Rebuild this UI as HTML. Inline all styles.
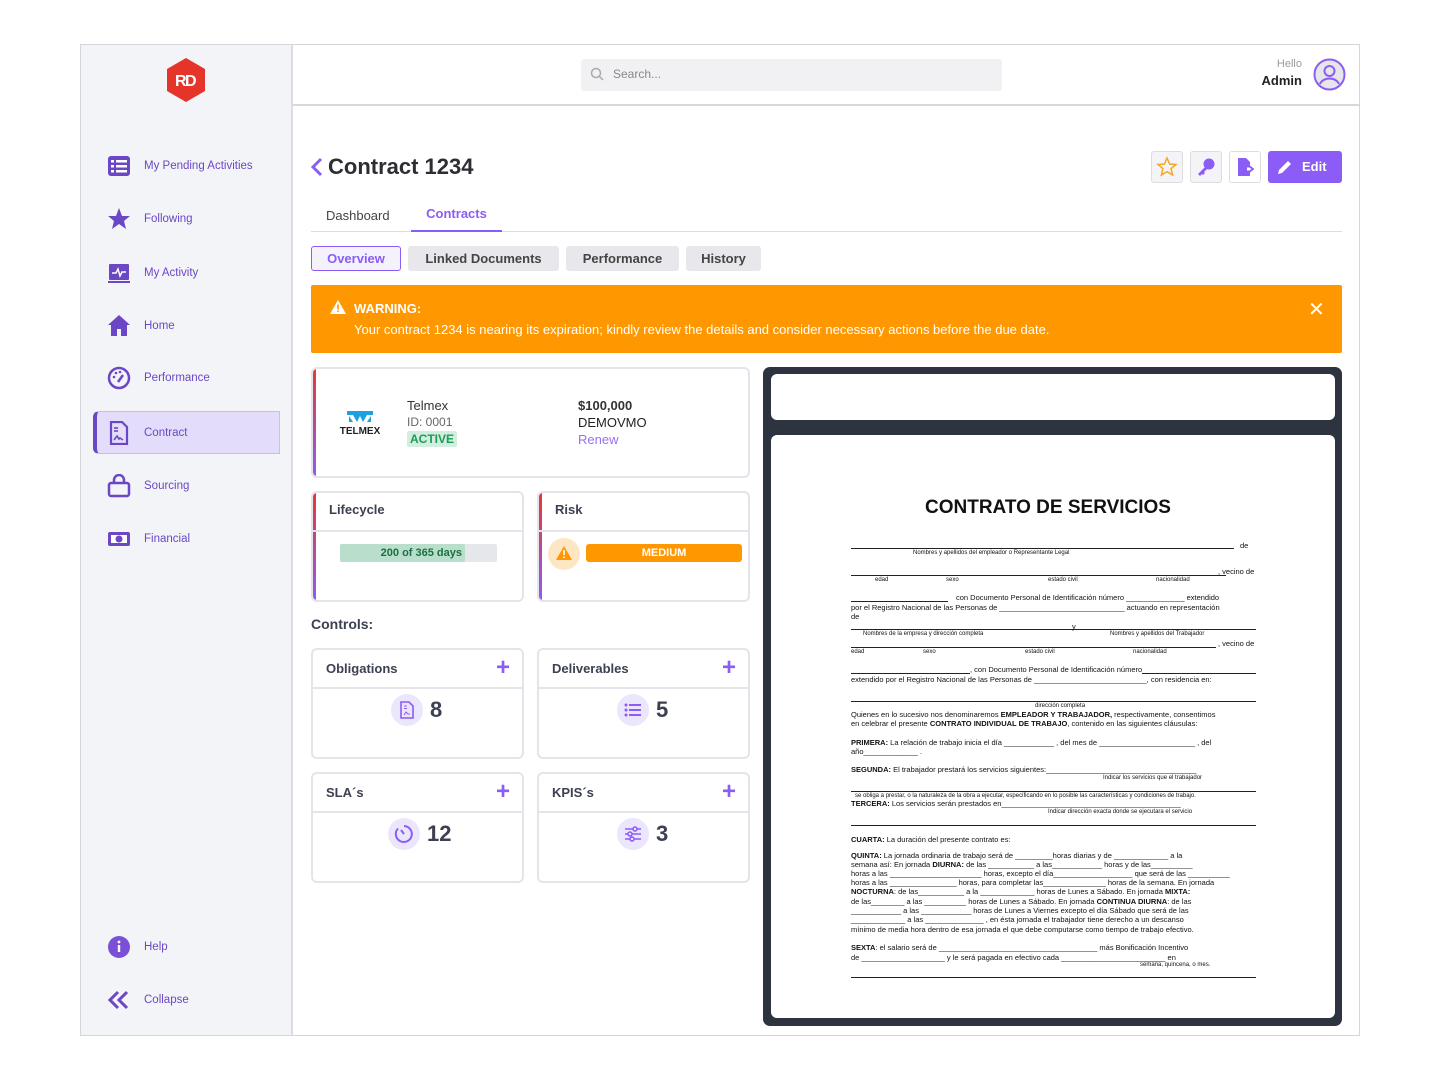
<!DOCTYPE html>
<html><head><meta charset="utf-8"><style>
*{box-sizing:border-box;margin:0;padding:0}
body{width:1440px;height:1080px;background:#fff;font-family:"Liberation Sans",sans-serif;position:relative;overflow:hidden;color:#333}
.abs{position:absolute}
.frame{left:80px;top:44px;width:1280px;height:992px;border:1px solid #d6d6da}
.side{left:81px;top:45px;width:212px;height:990px;background:#f3f4f8;border-right:2px solid #dcdce2}
.nav{position:absolute;left:26px;display:flex;align-items:center;font-size:11.5px;color:#6b47c6}
.nav svg{width:24px;height:24px;margin-right:13px}
.hdr{left:293px;top:45px;width:1066px;height:61px;border-bottom:2px solid #d8d8dc}
.card{position:absolute;background:#fff;border:2px solid #e4e4ea;border-radius:6px;overflow:hidden}
.accent::before{content:"";position:absolute;left:0;top:0;bottom:0;width:3px;background:linear-gradient(#e53935,#8b5cf6)}
.ctitle{font-weight:bold;font-size:13px;color:#3d4050}
.plus{position:absolute;right:12px;top:8px;color:#8b5cf6;font-size:24px;line-height:20px;font-weight:bold}
.circ{width:32px;height:32px;border-radius:50%;background:#ece6fd;display:flex;align-items:center;justify-content:center}
.num{font-size:22px;font-weight:bold;color:#3d4050}
.d{position:absolute;font-size:7.5px;color:#111;white-space:nowrap;font-family:"Liberation Sans",sans-serif}
.ln{position:absolute;height:1px;background:#222}
.s{font-size:6px}
</style></head><body>
<div class="abs frame"></div>
<div class="abs side">
  <svg class="abs" style="left:84px;top:12px" width="42" height="46" viewBox="0 0 42 46"><polygon points="21,1 40,12 40,34 21,45 2,34 2,12" fill="#e5352b"/><text x="20" y="29" text-anchor="middle" font-family="Liberation Sans" font-weight="bold" font-size="16" fill="#fff" letter-spacing="-1.5">RD</text></svg>
  <div class="nav" style="top:109px"><svg viewBox="0 0 24 24"><rect x="1" y="2" width="22" height="20" rx="3" fill="#6b47c6"/><g fill="#fff"><rect x="4" y="6" width="3" height="2.5"/><rect x="9" y="6" width="11" height="2.5"/><rect x="4" y="11" width="3" height="2.5"/><rect x="9" y="11" width="11" height="2.5"/><rect x="4" y="16" width="3" height="2.5"/><rect x="9" y="16" width="11" height="2.5"/></g></svg>My Pending Activities</div>
  <div class="nav" style="top:162px"><svg viewBox="0 0 24 24"><polygon points="12,1 15,9 23,9 17,14 19,22 12,17 5,22 7,14 1,9 9,9" fill="#6b47c6"/></svg>Following</div>
  <div class="nav" style="top:216px"><svg viewBox="0 0 24 24"><rect x="2" y="3" width="20" height="16" rx="1" fill="#6b47c6"/><polyline points="5,12 9,12 11,8 13,15 15,11 19,11" stroke="#fff" stroke-width="1.5" fill="none"/><rect x="1" y="20" width="22" height="2" fill="#6b47c6"/></svg>My Activity</div>
  <div class="nav" style="top:269px"><svg viewBox="0 0 24 24"><path d="M12 1 L23 11 H20 V22 H14 V15 H10 V22 H4 V11 H1Z" fill="#6b47c6"/></svg>Home</div>
  <div class="nav" style="top:321px"><svg viewBox="0 0 24 24"><circle cx="12" cy="12" r="10" stroke="#6b47c6" stroke-width="2.5" fill="none"/><circle cx="7" cy="11" r="1.3" fill="#6b47c6"/><circle cx="9" cy="7" r="1.3" fill="#6b47c6"/><circle cx="13" cy="6" r="1.3" fill="#6b47c6"/><line x1="11" y1="16" x2="16" y2="9" stroke="#6b47c6" stroke-width="2.5"/></svg>Performance</div>
  <div class="abs" style="left:12px;top:366px;width:187px;height:43px;background:#e3dcfa;border:1px solid #c9bdf0;border-left:4px solid #6b47c6;border-radius:6px 0 0 6px"></div>
  <div class="nav" style="top:376px"><svg viewBox="0 0 24 24"><path d="M4 1 H15 L20 6 V23 H4Z" stroke="#6b47c6" stroke-width="2.2" fill="none"/><line x1="7" y1="7" x2="11" y2="7" stroke="#6b47c6" stroke-width="1.6"/><line x1="7" y1="10" x2="11" y2="10" stroke="#6b47c6" stroke-width="1.6"/><polyline points="7,19 10,15 12,18 13,17 16,19" stroke="#6b47c6" stroke-width="1.6" fill="none"/></svg>Contract</div>
  <div class="nav" style="top:429px"><svg viewBox="0 0 24 24"><rect x="2" y="9" width="20" height="13" rx="2" stroke="#6b47c6" stroke-width="2.5" fill="none"/><path d="M7 9 V6 a5 5 0 0 1 10 0 V9" stroke="#6b47c6" stroke-width="2.5" fill="none"/></svg>Sourcing</div>
  <div class="nav" style="top:482px"><svg viewBox="0 0 24 24"><rect x="1" y="5" width="22" height="14" rx="2" fill="#6b47c6"/><rect x="4" y="8" width="16" height="8" fill="#fff"/><circle cx="12" cy="12" r="3.5" fill="#6b47c6"/></svg>Financial</div>
  <div class="nav" style="top:890px"><svg viewBox="0 0 24 24"><circle cx="12" cy="12" r="11" fill="#7b4fd6"/><rect x="10.8" y="10" width="2.4" height="7" fill="#fff"/><circle cx="12" cy="7" r="1.4" fill="#fff"/></svg>Help</div>
  <div class="nav" style="top:943px"><svg viewBox="0 0 24 24"><polyline points="11,4 3,12 11,20" stroke="#6b47c6" stroke-width="3" fill="none"/><polyline points="20,4 12,12 20,20" stroke="#6b47c6" stroke-width="3" fill="none"/></svg>Collapse</div>
</div>
<div class="abs hdr"></div>
<div class="abs" style="left:581px;top:59px;width:421px;height:32px;background:#f1f1f4;border-radius:3px;font-size:12px;color:#888;padding:8px 0 0 32px">Search...
<svg class="abs" style="left:9px;top:8px" width="14" height="14" viewBox="0 0 14 14"><circle cx="6" cy="6" r="4.5" stroke="#aaa" stroke-width="1.5" fill="none"/><line x1="9.5" y1="9.5" x2="13" y2="13" stroke="#aaa" stroke-width="1.5"/></svg></div>
<div class="abs" style="left:1240px;top:58px;width:62px;text-align:right;font-size:11px;color:#999">Hello</div>
<div class="abs" style="left:1240px;top:73px;width:62px;text-align:right;font-size:13px;font-weight:bold;color:#222">Admin</div>
<svg class="abs" style="left:1313px;top:58px" width="33" height="33" viewBox="0 0 33 33"><circle cx="16.5" cy="16.5" r="15" fill="#e6e6ea" stroke="#8b5cf6" stroke-width="2"/><circle cx="16.5" cy="13" r="5" stroke="#8b5cf6" stroke-width="2" fill="none"/><path d="M7 26 a10 8 0 0 1 19 0" stroke="#8b5cf6" stroke-width="2" fill="none"/></svg>

<svg class="abs" style="left:310px;top:157px" width="14" height="20" viewBox="0 0 14 20"><polyline points="11,2 3,10 11,18" stroke="#8b5cf6" stroke-width="3" fill="none"/></svg>
<div class="abs" style="left:328px;top:154px;font-size:22px;font-weight:bold;color:#2d2d33">Contract 1234</div>
<div class="abs" style="left:1151px;top:151px;width:32px;height:32px;border:1px solid #ddd;border-radius:3px;background:#f4f4f8"><svg width="30" height="30" viewBox="0 0 30 30"><polygon points="15,6 17.6,12 24,12.5 19,16.7 20.6,23 15,19.6 9.4,23 11,16.7 6,12.5 12.4,12" stroke="#f5a623" stroke-width="1.5" fill="none"/></svg></div>
<div class="abs" style="left:1190px;top:151px;width:32px;height:32px;border:1px solid #ddd;border-radius:3px;background:#f4f4f8"><svg width="30" height="30" viewBox="0 0 30 30"><circle cx="18" cy="12" r="5.5" fill="#8b5cf6"/><path d="M14 15 L7 22 L9 24 L11 22 L12 23 L14 21 L13 20 L16 17Z" fill="#8b5cf6"/></svg></div>
<div class="abs" style="left:1229px;top:151px;width:32px;height:32px;border:1px solid #ddd;border-radius:3px;background:#fff"><svg width="30" height="30" viewBox="0 0 30 30"><path d="M8 6 H16 L20 10 V24 H8Z" fill="#8b5cf6"/><polyline points="17,17 23,17" stroke="#fff" stroke-width="3"/><polyline points="19,14 23,17 19,20" stroke="#8b5cf6" stroke-width="1.8" fill="none"/></svg></div>
<div class="abs" style="left:1268px;top:151px;width:74px;height:32px;background:#8b5cf6;border-radius:3px;color:#fff;font-weight:bold;font-size:13px;padding:8px 0 0 34px">Edit<svg class="abs" style="left:8px;top:7px" width="18" height="18" viewBox="0 0 18 18"><path d="M2 16 L3 12 L12 3 L15 6 L6 15Z" fill="#fff"/></svg></div>

<div class="abs" style="left:311px;top:231px;width:1031px;height:1px;background:#ddd"></div>
<div class="abs" style="left:326px;top:208px;font-size:13px;color:#444">Dashboard</div>
<div class="abs" style="left:411px;top:206px;width:91px;height:26px;border-bottom:2px solid #8b5cf6;font-size:13px;color:#8b5cf6;font-weight:bold;text-align:center">Contracts</div>

<div class="abs" style="left:311px;top:246px;width:90px;height:25px;border:1.5px solid #8b5cf6;border-radius:3px;background:#f4f2fd;color:#8b5cf6;font-weight:bold;font-size:13px;text-align:center;padding-top:4px">Overview</div>
<div class="abs" style="left:408px;top:246px;width:151px;height:25px;border-radius:3px;background:#e8e8ec;color:#444;font-weight:bold;font-size:13px;text-align:center;padding-top:5px">Linked Documents</div>
<div class="abs" style="left:566px;top:246px;width:113px;height:25px;border-radius:3px;background:#e8e8ec;color:#444;font-weight:bold;font-size:13px;text-align:center;padding-top:5px">Performance</div>
<div class="abs" style="left:686px;top:246px;width:75px;height:25px;border-radius:3px;background:#e8e8ec;color:#444;font-weight:bold;font-size:13px;text-align:center;padding-top:5px">History</div>

<div class="abs" style="left:311px;top:285px;width:1031px;height:68px;background:#ff9800;border-radius:2px;color:#fff">
<svg class="abs" style="left:18px;top:14px" width="18" height="16" viewBox="0 0 18 16"><polygon points="9,1 17,15 1,15" fill="#fff"/><rect x="8.2" y="5.5" width="1.6" height="5" fill="#ff9800"/><rect x="8.2" y="11.5" width="1.6" height="1.6" fill="#ff9800"/></svg>
<div class="abs" style="left:43px;top:16px;font-weight:bold;font-size:13px">WARNING:</div>
<div class="abs" style="left:43px;top:37px;font-size:13px">Your contract 1234 is nearing its expiration; kindly review the details and consider necessary actions before the due date.</div>
<div class="abs" style="left:997px;top:12px;font-size:20px">✕</div>
</div>

<div class="card accent" style="left:311px;top:367px;width:439px;height:111px">
<svg class="abs" style="left:22px;top:40px" width="50" height="30" viewBox="0 0 50 30"><path d="M12 2 H38 V6 H32 L28 13 L25 7 L22 13 L18 6 H12Z M14 7 L18 13 H14Z M36 7 L32 13 H36Z" fill="#1da1e0"/><text x="25" y="25" text-anchor="middle" font-family="Liberation Sans" font-weight="bold" font-size="10" fill="#222">TELMEX</text></svg>
<div class="abs" style="left:94px;top:29px;font-size:13px;color:#333">Telmex</div>
<div class="abs" style="left:94px;top:46px;font-size:12px;color:#666">ID: 0001</div>
<div class="abs" style="left:94px;top:62px;font-size:12px;color:#1a9e55;background:#d3ede0;font-weight:bold;padding:1px 3px;border-radius:2px">ACTIVE</div>
<div class="abs" style="left:265px;top:29px;font-size:13px;color:#333;font-weight:bold">$100,000</div>
<div class="abs" style="left:265px;top:46px;font-size:13px;color:#222">DEMOVMO</div>
<div class="abs" style="left:265px;top:63px;font-size:13px;color:#9b6ef5">Renew</div>
</div>

<div class="card accent" style="left:311px;top:491px;width:213px;height:111px">
<div class="ctitle abs" style="left:16px;top:9px">Lifecycle</div>
<div class="abs" style="left:0;top:37px;width:100%;height:2px;background:#e4e4ea"></div>
<div class="abs" style="left:27px;top:51px;width:157px;height:18px;background:#e6e7ea;border-radius:2px"><div style="width:125px;height:18px;background:#b9dfcc;border-radius:2px;font-size:11px;font-weight:bold;color:#1c6f43;text-align:right;padding:3px 3px 0 0">200 of 365 days</div></div>
</div>
<div class="card accent" style="left:537px;top:491px;width:213px;height:111px">
<div class="ctitle abs" style="left:16px;top:9px">Risk</div>
<div class="abs" style="left:0;top:37px;width:100%;height:2px;background:#e4e4ea"></div>
<div class="abs" style="left:9px;top:45px;width:32px;height:32px;border-radius:50%;background:#fde6c4"><svg width="32" height="32" viewBox="0 0 32 32"><polygon points="16,8 24,22 8,22" fill="#ff9800"/><rect x="15.2" y="12" width="1.6" height="5" fill="#fff"/><rect x="15.2" y="18.5" width="1.6" height="1.6" fill="#fff"/></svg></div>
<div class="abs" style="left:47px;top:51px;width:156px;height:18px;background:#ff9800;border-radius:3px;color:#fff;font-size:11px;font-weight:bold;text-align:center;padding-top:3px">MEDIUM</div>
</div>

<div class="abs" style="left:311px;top:616px;font-size:14px;font-weight:bold;color:#3d4050">Controls:</div>

<div class="card" style="left:311px;top:648px;width:213px;height:111px"><div class="ctitle abs" style="left:13px;top:11px">Obligations</div><div class="plus">+</div><div class="abs" style="left:0;top:37px;width:100%;height:2px;background:#e4e4ea"></div>
<div class="abs" style="left:78px;top:44px;display:flex;align-items:center;gap:7px"><div class="circ"><svg width="16" height="18" viewBox="0 0 16 18"><path d="M2 1 H10 L14 5 V17 H2Z" stroke="#8b5cf6" stroke-width="1.6" fill="none"/><line x1="5" y1="5" x2="8" y2="5" stroke="#8b5cf6"/><line x1="5" y1="7.5" x2="8" y2="7.5" stroke="#8b5cf6"/><polyline points="5,14 7,11 9,13 11,13" stroke="#8b5cf6" fill="none"/></svg></div><span class="num">8</span></div></div>
<div class="card" style="left:537px;top:648px;width:213px;height:111px"><div class="ctitle abs" style="left:13px;top:11px">Deliverables</div><div class="plus">+</div><div class="abs" style="left:0;top:37px;width:100%;height:2px;background:#e4e4ea"></div>
<div class="abs" style="left:78px;top:44px;display:flex;align-items:center;gap:7px"><div class="circ"><svg width="18" height="14" viewBox="0 0 18 14"><g fill="#8b5cf6"><circle cx="2" cy="2" r="1.5"/><circle cx="2" cy="7" r="1.5"/><circle cx="2" cy="12" r="1.5"/><rect x="5" y="1" width="12" height="2"/><rect x="5" y="6" width="12" height="2"/><rect x="5" y="11" width="12" height="2"/></g></svg></div><span class="num">5</span></div></div>
<div class="card" style="left:311px;top:772px;width:213px;height:111px"><div class="ctitle abs" style="left:13px;top:11px">SLA´s</div><div class="plus">+</div><div class="abs" style="left:0;top:37px;width:100%;height:2px;background:#e4e4ea"></div>
<div class="abs" style="left:75px;top:44px;display:flex;align-items:center;gap:7px"><div class="circ"><svg width="20" height="20" viewBox="0 0 20 20"><path d="M10 2 A8 8 0 1 1 4 4.5" stroke="#8b5cf6" stroke-width="2" fill="none"/><line x1="10" y1="10" x2="7" y2="6" stroke="#8b5cf6" stroke-width="2"/></svg></div><span class="num">12</span></div></div>
<div class="card" style="left:537px;top:772px;width:213px;height:111px"><div class="ctitle abs" style="left:13px;top:11px">KPIS´s</div><div class="plus">+</div><div class="abs" style="left:0;top:37px;width:100%;height:2px;background:#e4e4ea"></div>
<div class="abs" style="left:78px;top:44px;display:flex;align-items:center;gap:7px"><div class="circ"><svg width="18" height="16" viewBox="0 0 18 16"><g stroke="#8b5cf6" stroke-width="1.5" fill="#ece6fd"><line x1="1" y1="3" x2="17" y2="3"/><line x1="1" y1="8" x2="17" y2="8"/><line x1="1" y1="13" x2="17" y2="13"/><circle cx="11" cy="3" r="2"/><circle cx="6" cy="8" r="2"/><circle cx="8" cy="13" r="2"/></g></svg></div><span class="num">3</span></div></div>

<div class="abs" style="left:763px;top:367px;width:579px;height:659px;background:#2e3340;border-radius:7px"></div>
<div class="abs" style="left:771px;top:374px;width:564px;height:46px;background:#fff;border-radius:6px"></div>
<div class="abs" style="left:771px;top:435px;width:564px;height:583px;background:#fff;border-radius:6px"></div>

<div class="abs" style="left:771px;top:497px;width:554px;text-align:center;font-size:19px;font-weight:bold;color:#111">CONTRATO DE SERVICIOS</div>
<div class="ln" style="left:851px;top:548px;width:383px"></div><div class="d" style="left:1240px;top:541px">de</div>
<div class="d s" style="left:913px;top:550px">Nombres y apellidos del empleador o Representante Legal</div>
<div class="ln" style="left:851px;top:575px;width:375px"></div><div class="d" style="left:1218px;top:567px">, vecino de</div>
<div class="d s" style="left:875px;top:577px">edad</div><div class="d s" style="left:946px;top:577px">sexo</div><div class="d s" style="left:1048px;top:577px">estado civil</div><div class="d s" style="left:1156px;top:577px">nacionalidad</div>
<div class="ln" style="left:851px;top:601px;width:97px"></div><div class="d" style="left:956px;top:593px">con Documento Personal de Identificación número ______________ extendido</div>
<div class="d" style="left:851px;top:603px">por el Registro Nacional de las Personas de ______________________________ actuando en representación</div>
<div class="d" style="left:851px;top:612px">de</div>
<div class="ln" style="left:851px;top:629px;width:405px"></div><div class="d" style="left:1072px;top:622px">y</div>
<div class="d s" style="left:863px;top:631px">Nombres de la empresa y dirección completa</div><div class="d s" style="left:1110px;top:631px">Nombres y apellidos del Trabajador</div>
<div class="ln" style="left:851px;top:647px;width:365px"></div><div class="d" style="left:1218px;top:639px">, vecino de</div>
<div class="d s" style="left:851px;top:649px">edad</div><div class="d s" style="left:923px;top:649px">sexo</div><div class="d s" style="left:1025px;top:649px">estado civil</div><div class="d s" style="left:1133px;top:649px">nacionalidad</div>
<div class="ln" style="left:851px;top:673px;width:405px"></div><div class="d" style="left:970px;top:665px;background:#fff">, con Documento Personal de Identificación número</div>
<div class="d" style="left:851px;top:675px">extendido por el Registro Nacional de las Personas de ___________________________, con residencia en:</div>
<div class="ln" style="left:851px;top:701px;width:405px"></div>
<div class="d s" style="left:1035px;top:703px">dirección completa</div>
<div class="d" style="left:851px;top:710px">Quienes en lo sucesivo nos denominaremos <b>EMPLEADOR Y TRABAJADOR,</b> respectivamente, consentimos</div>
<div class="d" style="left:851px;top:719px">en celebrar el presente <b>CONTRATO INDIVIDUAL DE TRABAJO</b>, contenido en las siguientes cláusulas:</div>
<div class="d" style="left:851px;top:738px"><b>PRIMERA:</b> La relación de trabajo inicia el día ____________ , del mes de _______________________ , del</div>
<div class="d" style="left:851px;top:747px">año_____________ .</div>
<div class="d" style="left:851px;top:765px"><b>SEGUNDA:</b> El trabajador prestará los servicios siguientes:____________________________________</div>
<div class="d s" style="left:1103px;top:775px">Indicar los servicios que el trabajador</div>
<div class="ln" style="left:851px;top:791px;width:405px"></div>
<div class="d s" style="left:855px;top:793px">se obliga a prestar, o la naturaleza de la obra a ejecutar, especificando en lo posible las características y condiciones de trabajo.</div>
<div class="d" style="left:851px;top:799px"><b>TERCERA:</b> Los servicios serán prestados en___________________________________________</div>
<div class="d s" style="left:1048px;top:809px">Indicar dirección exacta donde se ejecutara el servicio</div>
<div class="ln" style="left:851px;top:825px;width:405px"></div>
<div class="d" style="left:851px;top:835px"><b>CUARTA:</b> La duración del presente contrato es:</div>
<div class="d" style="left:851px;top:851px"><b>QUINTA:</b> La jornada ordinaria de trabajo será de _________horas diarias y de _____________ a la</div>
<div class="d" style="left:851px;top:860px">semana así: En jornada <b>DIURNA:</b> de las ___________ a las____________ horas y de las__________</div>
<div class="d" style="left:851px;top:869px">horas a las ______________________ horas, excepto el día___________________ que será de las __________</div>
<div class="d" style="left:851px;top:878px">horas a las ________________ horas, para completar las_______________ horas de la semana. En jornada</div>
<div class="d" style="left:851px;top:887px"><b>NOCTURNA</b>: de las___________ a la _____________ horas de Lunes a Sábado. En jornada <b>MIXTA:</b></div>
<div class="d" style="left:851px;top:897px">de las________ a las __________ horas de Lunes a Sábado. En jornada <b>CONTINUA DIURNA</b>: de las</div>
<div class="d" style="left:851px;top:906px">____________ a las ____________ horas de Lunes a Viernes excepto el día Sábado que será de las</div>
<div class="d" style="left:851px;top:915px">_____________ a las ______________ , en ésta jornada el trabajador tiene derecho a un descanso</div>
<div class="d" style="left:851px;top:925px">mínimo de media hora dentro de esa jornada el que debe computarse como tiempo de trabajo efectivo.</div>
<div class="d" style="left:851px;top:943px"><b>SEXTA</b>: el salario será de ______________________________________ más Bonificación Incentivo</div>
<div class="d" style="left:851px;top:953px">de ____________________ y le será pagada en efectivo cada _________________________ en</div>
<div class="d s" style="left:1140px;top:962px">semana, quincena, o mes.</div>
<div class="ln" style="left:851px;top:977px;width:405px"></div>
</body></html>
